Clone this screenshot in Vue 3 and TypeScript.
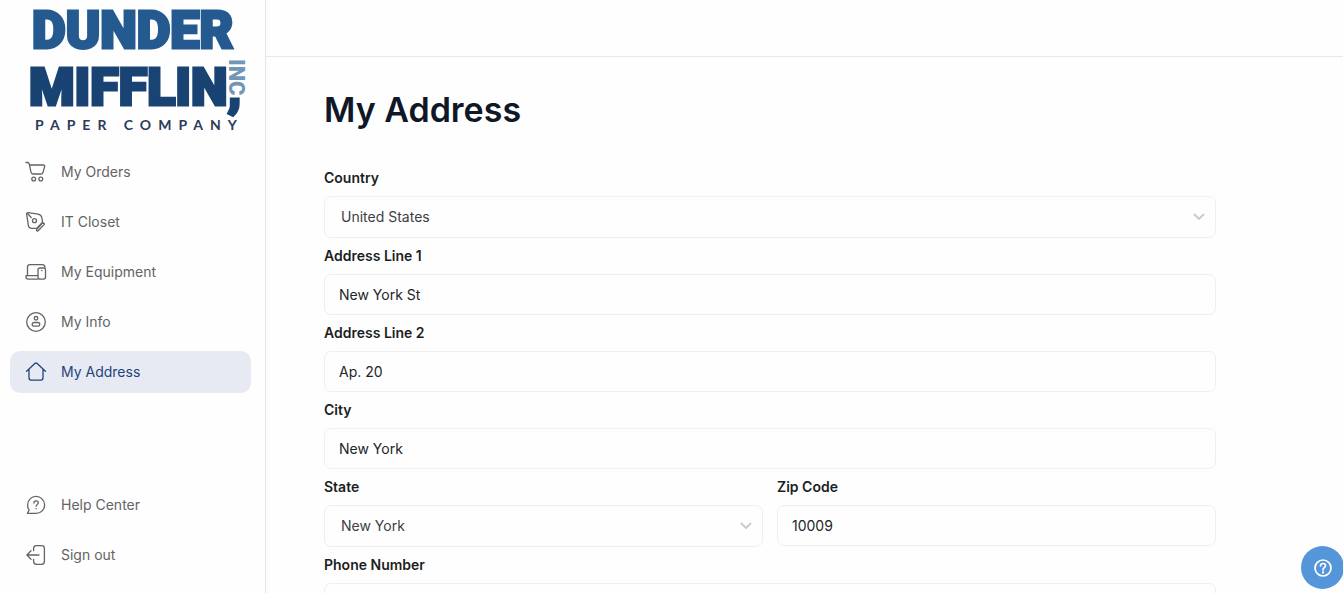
<script setup lang="ts">
import { ref } from 'vue'

const primary = [
  { label: 'My Orders', icon: 'cart' },
  { label: 'IT Closet', icon: 'pen' },
  { label: 'My Equipment', icon: 'laptop' },
  { label: 'My Info', icon: 'user' },
  { label: 'My Address', icon: 'home', active: true },
]
const secondary = [
  { label: 'Help Center', icon: 'help' },
  { label: 'Sign out', icon: 'exit' },
]
const groups = [primary, secondary] as { label: string; icon: string; active?: boolean }[][]

const country = ref('United States')
const line1 = ref('New York St')
const line2 = ref('Ap. 20')
const city = ref('New York')
const state = ref('New York')
const zip = ref('10009')
const phone = ref('')
</script>

<template>
  <div class="shell">
    <aside class="sidebar">
      <a class="logo" href="#" aria-label="Dunder Mifflin">
        <svg viewBox="0 0 220 132" width="220" height="132">
          <text class="heavy top" x="3" y="48">DUNDER</text>
          <text class="heavy bottom" x="0" y="105">MIFFLIN,</text>
          <text class="inc" transform="translate(200 59) rotate(90)">INC</text>
          <text class="tag" x="6" y="130">PAPER COMPANY</text>
        </svg>
      </a>
      <nav v-for="(group, g) in groups" :key="g" class="nav">
        <a v-for="item in group" :key="item.label" href="#" class="item" :class="{ active: item.active }">
          <svg class="icon" viewBox="0 0 22 22" width="22" height="22">
            <template v-if="item.icon === 'cart'">
              <path d="M1 1.500h1.600c.9 0 1.400.5 1.600 1.300L6 11.200c.3 1.200 1 1.800 2.200 1.800h7.600c1.100 0 1.900-.6 2.200-1.700l1.600-5.600c.3-1-.3-1.700-1.200-1.700H4.700" />
              <circle cx="8.700" cy="18" r="1.900" /><circle cx="15.800" cy="18" r="1.900" />
            </template>
            <template v-else-if="item.icon === 'pen'">
              <path d="M3.300 1.700l9.700 1.400c2.200.3 3.400 1.300 3.800 3.400l.7 3.700c.1.700-.1 1.200-.6 1.700l-4.600 4.700c-.5.500-1 .7-1.700.7H7c-2.200 0-3.400-1-3.700-3.200L1.700 3.300c-.1-1.100.5-1.700 1.600-1.600z" />
              <path d="M2.300 2.300l3.900 4.200" /><circle cx="9.500" cy="9.700" r="2" />
              <path d="M17.300 12.300l1.300-.3c.8.300 1 .9.500 1.600l-6 6.100c-.9.800-2.100-.2-1.500-1.200z" />
            </template>
            <template v-else-if="item.icon === 'laptop'">
              <path d="M2.500 14.600V6c0-1.500.8-2.300 2.300-2.300h12.400c1.600 0 2.600.8 2.700 2.600" />
              <path d="M13 14.600H1v1.200c0 1.500.8 2.300 2.300 2.300H13" />
              <rect x="13" y="7" width="7.500" height="11.100" rx="2" /><path d="M16.500 9.600h.5" />
            </template>
            <template v-else-if="item.icon === 'user'">
              <circle cx="11" cy="11" r="9.300" /><circle cx="11" cy="7.300" r="1.800" />
              <path d="M9.300 11.500h3.400c1.300 0 2.100.8 2.100 1.900s-.7 1.700-1.800 1.700H9c-1.100 0-1.800-.6-1.800-1.700s.8-1.900 2.100-1.900z" />
            </template>
            <template v-else-if="item.icon === 'home'">
              <path d="M1.600 10.300l8.200-7.800c.8-.7 1.600-.7 2.400 0l8.200 7.800M4 8.500v8.200c0 1.600.9 2.500 2.500 2.500h9c1.600 0 2.500-.9 2.500-2.500V8.500" />
            </template>
            <template v-else-if="item.icon === 'help'">
              <path d="M2.400 19.400h8.800a8.500 8.500 0 1 0-8.600-8.500c0 2.400.6 4 1.500 5.300z" />
              <path d="M8.900 9c0-1.400.9-2.200 2.200-2.200s2.200.8 2.200 2c0 1.500-2.200 1.700-2.200 3.400M11.100 14.600v.2" />
            </template>
            <template v-else>
              <path d="M8.600 6.700V4.400c0-1.700.9-2.700 2.700-2.700h5.400c1.800 0 2.700 1 2.700 2.700v13.200c0 1.700-.9 2.700-2.700 2.700h-5.400c-1.800 0-2.700-1-2.700-2.700v-2.300" />
              <path d="M14 11H2M6 6.700L1.900 11 6 15.300" />
            </template>
          </svg>
          <span>{{ item.label }}</span>
        </a>
      </nav>
    </aside>

    <div class="page">
      <header class="topbar"></header>
      <main class="content">
        <h1>My Address</h1>
        <form class="form" @submit.prevent>
          <div class="field">
            <label for="country">Country</label>
            <div class="select">
              <select id="country" v-model="country"><option>United States</option></select>
              <svg class="chevron" viewBox="0 0 12 8" width="12" height="8"><path d="M1.500 1.500L6 6l4.500-4.500" /></svg>
            </div>
          </div>
          <div class="field">
            <label for="line1">Address Line 1</label>
            <input id="line1" v-model="line1" type="text" />
          </div>
          <div class="field">
            <label for="line2">Address Line 2</label>
            <input id="line2" v-model="line2" type="text" />
          </div>
          <div class="field">
            <label for="city">City</label>
            <input id="city" v-model="city" type="text" />
          </div>
          <div class="pair">
            <div class="field">
              <label for="state">State</label>
              <div class="select">
                <select id="state" v-model="state"><option>New York</option></select>
                <svg class="chevron" viewBox="0 0 12 8" width="12" height="8"><path d="M1.500 1.500L6 6l4.500-4.500" /></svg>
              </div>
            </div>
            <div class="field">
              <label for="zip">Zip Code</label>
              <input id="zip" v-model="zip" type="text" />
            </div>
          </div>
          <div class="field">
            <label for="phone">Phone Number</label>
            <input id="phone" v-model="phone" type="tel" />
          </div>
        </form>
      </main>
    </div>

    <button class="fab" type="button" aria-label="Help">
      <svg viewBox="0 0 20 20" width="20" height="20">
        <circle cx="10" cy="10" r="8" />
        <path d="M7.500 8c0-1.500 1-2.500 2.500-2.500s2.500 1 2.500 2.300c0 1.800-2.500 2-2.500 4M10 13.700v1.300" />
      </svg>
    </button>
  </div>
</template>

<style>
body {
  margin: 0;
  background: #fefefe;
}
</style>

<style scoped>
.shell {
  display: flex;
  height: 100vh;
  overflow: hidden;
  font-family: Inter, "Liberation Sans", sans-serif;
  font-size: 14px;
  line-height: 20px;
  color: #1c1e22;
}
.sidebar {
  box-sizing: border-box;
  flex: 0 0 266px;
  display: flex;
  flex-direction: column;
  justify-content: space-between;
  padding: 0 14px 17px 10px;
  border-right: 1px solid #e6e6e6;
}
.logo {
  display: flex;
  margin: 0 0 19px 19px;
}
.logo svg {
  overflow: visible;
}
.heavy {
  font-family: Roboto, "Liberation Sans", sans-serif;
  font-size: 52px;
  font-weight: 900;
  stroke-width: 3px;
}
.top {
  fill: #245a90;
  stroke: #245a90;
}
.bottom {
  fill: #194372;
  stroke: #194372;
}
.inc {
  font-family: Roboto, "Liberation Sans", sans-serif;
  font-weight: 900;
  font-size: 22px;
  fill: #7396b8;
}
.tag {
  font-family: Lato, sans-serif;
  font-size: 14px;
  font-weight: 700;
  letter-spacing: 7px;
  fill: #2c3b58;
}
.nav {
  display: flex;
  flex-direction: column;
  gap: 8px;
}
.nav:last-child {
  margin-top: auto;
}
.item {
  box-sizing: border-box;
  height: 42px;
  display: flex;
  align-items: center;
  gap: 14px;
  padding: 0 15px;
  border-radius: 10px;
  color: #646464;
  text-decoration: none;
}
.active {
  background: #e7eaf2;
  color: #24437c;
}
.icon,
.chevron,
.fab svg {
  fill: none;
  stroke: currentColor;
  stroke-width: 1.3;
  stroke-linecap: round;
  stroke-linejoin: round;
}
.page {
  flex: 1;
  min-width: 0;
  overflow: auto;
  scrollbar-width: none;
}
.topbar {
  height: 56px;
  border-bottom: 1px solid #e8e8e8;
}
.content {
  padding: 31px 127px 40px 58px;
}
h1 {
  margin: 0 0 36px;
  font-size: 34px;
  line-height: 44px;
  font-weight: 600;
  color: #101828;
}
.form {
  display: flex;
  flex-direction: column;
  gap: 8px;
}
.field {
  display: flex;
  flex-direction: column;
  gap: 8px;
  min-width: 0;
}
.pair {
  display: grid;
  grid-template-columns: 1fr 1fr;
  gap: 14px;
}
label {
  font-weight: 600;
}
input,
select {
  box-sizing: border-box;
  width: 100%;
  height: 41px;
  padding: 0 14px;
  border: 1px solid #efefef;
  border-radius: 7px;
  background: #fefefe;
  font: inherit;
  color: #222428;
  outline: none;
}
select {
  height: 42px;
  padding: 0 16px;
  appearance: none;
  color: #3c3e42;
}
.select {
  display: grid;
  align-items: center;
}
.select > * {
  grid-area: 1 / 1;
}
.chevron {
  justify-self: end;
  margin-right: 11px;
  color: #cccccc;
  stroke-width: 2;
  pointer-events: none;
}
.fab {
  position: fixed;
  right: -1px;
  bottom: 4px;
  width: 43px;
  height: 43px;
  display: flex;
  align-items: center;
  justify-content: center;
  padding: 0;
  border: 0;
  border-radius: 50%;
  background: #5596db;
  color: #ffffff;
}
.fab svg {
  stroke-width: 1.7;
}
</style>
